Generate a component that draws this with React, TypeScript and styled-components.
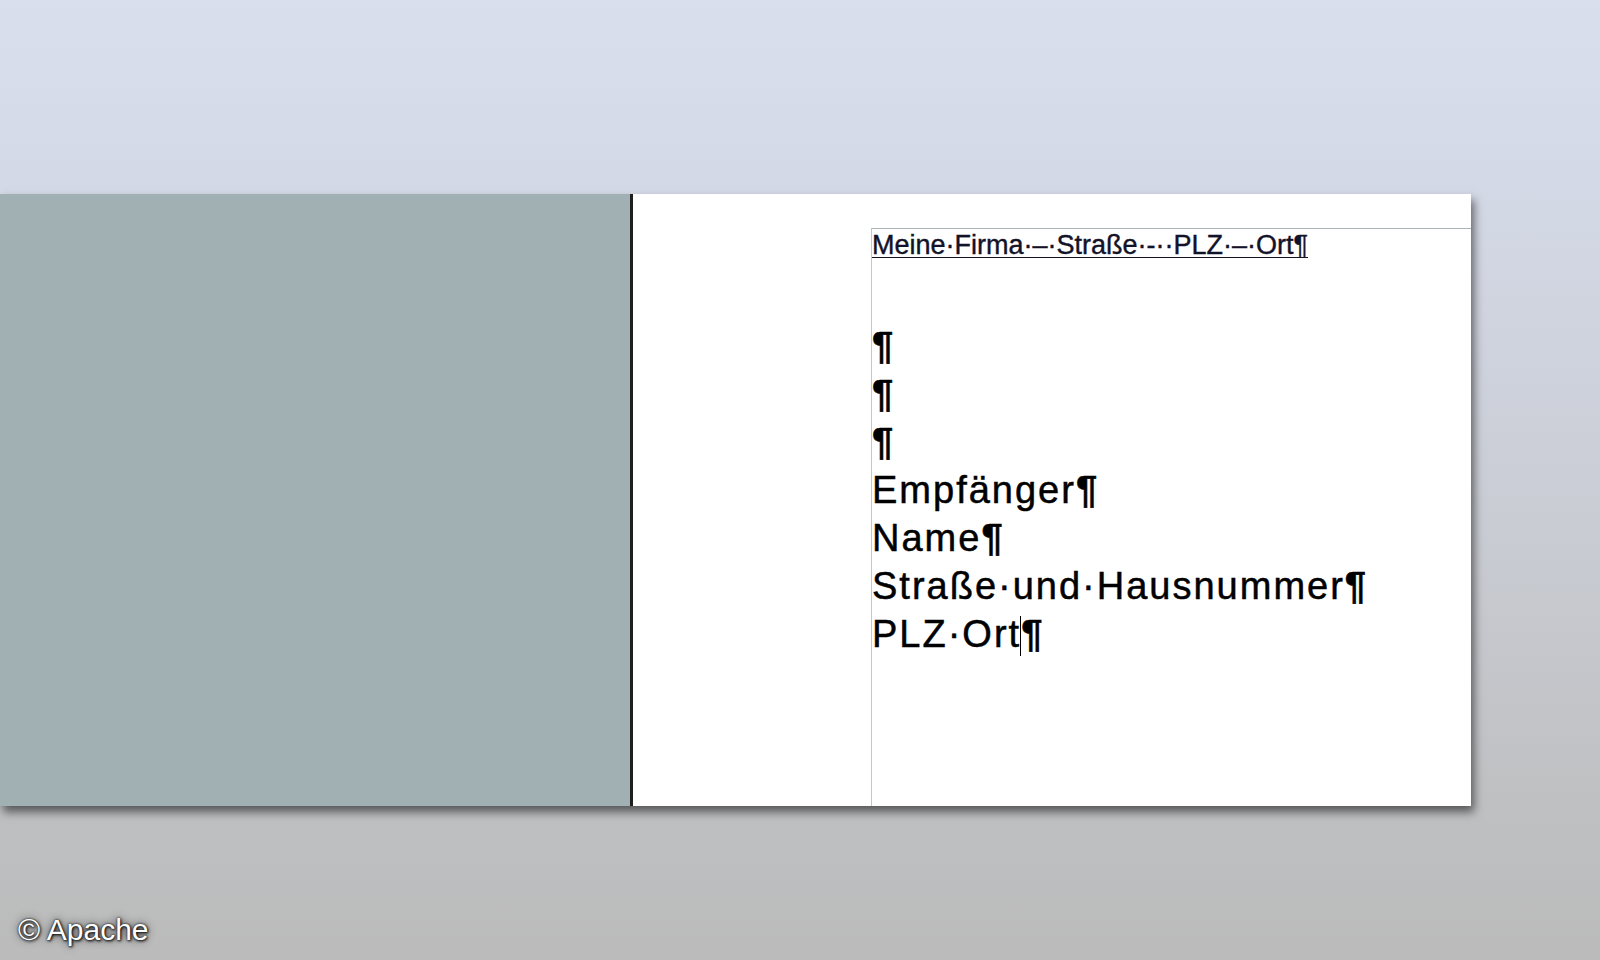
import styled, { createGlobalStyle } from 'styled-components';

const GlobalStyle = createGlobalStyle`
    html, body {
        margin: 0;
        padding: 0;
    }
    body {
        width: 1600px;
        height: 960px;
        overflow: hidden;
        font-family: "Liberation Sans", Arial, sans-serif;
        background: linear-gradient(
            to bottom,
            #d9dfed 0%,
            #d3d8e5 22%,
            #c9ccd3 55%,
            #bfc0c2 84%,
            #bbbbbb 100%
        );
    }
`;

const bodyLines = ['', '', '', 'Empfänger', 'Name', 'Straße·und·Hausnummer'];

export default function App() {
    return (
        <>
            <GlobalStyle />
            <Screen>
                <TopBand />
                <DocRow>
                    <SidePanel />
                    <Page>
                        <Gutter />
                        <TextArea>
                            <HeaderLine>
                                Meine·Firma·–·Straße·-··PLZ·–·Ort¶
                            </HeaderLine>
                            <Body>
                                {bodyLines.map((line, i) => (
                                    <Line key={i}>
                                        {line}
                                        <Pilcrow>¶</Pilcrow>
                                    </Line>
                                ))}
                                <Line>
                                    PLZ·Ort
                                    <Caret />
                                    <Pilcrow>¶</Pilcrow>
                                </Line>
                            </Body>
                        </TextArea>
                    </Page>
                </DocRow>
                <Footer>
                    <Credit>© Apache</Credit>
                </Footer>
            </Screen>
        </>
    );
}

const Screen = styled.div`
    width: 1600px;
    height: 960px;
    display: flex;
    flex-direction: column;
`;

const TopBand = styled.div`
    height: 194px;
    flex-shrink: 0;
`;

const DocRow = styled.div`
    height: 612px;
    width: 1471px;
    flex-shrink: 0;
    display: flex;
    box-shadow: 3px 6px 9px rgba(0, 0, 0, 0.55);
`;

const SidePanel = styled.div`
    width: 630px;
    background: #a0b0b3;
`;

const Page = styled.div`
    flex: 1;
    display: flex;
    background: #ffffff;
    border-left: 3px solid #1f1f1f;
`;

const Gutter = styled.div`
    width: 238px;
    flex-shrink: 0;
`;

const TextArea = styled.div`
    flex: 1;
    margin-top: 34px;
    border-top: 1px solid #aab3b5;
    border-left: 1px solid #c3c7c8;
    color: #000;
`;

const HeaderLine = styled.div`
    font-size: 27px;
    line-height: 32px;
    color: #121228;
    -webkit-text-stroke: 0.4px #121228;
    text-decoration: underline;
    text-decoration-thickness: 1px;
    text-underline-offset: 3px;
    white-space: nowrap;
`;

const Body = styled.div`
    margin-top: 61px;
    font-size: 38px;
    line-height: 48px;
    letter-spacing: 2px;
    -webkit-text-stroke: 0.5px #000;
`;

const Line = styled.div`
    white-space: nowrap;
    height: 48px;
`;

const Pilcrow = styled.span`
    font-weight: bold;
    letter-spacing: 0;
`;

const Caret = styled.span`
    display: inline-block;
    width: 1px;
    height: 40px;
    margin: 0 0 0 -1px;
    background: #000;
    vertical-align: -9px;
`;

const Footer = styled.div`
    flex: 1;
    display: flex;
    align-items: flex-end;
    padding: 0 0 13px 18px;
`;

const Credit = styled.div`
    font-size: 30px;
    line-height: 34px;
    color: #ffffff;
    text-shadow: 0 0 2px #111, 1px 1px 3px #000, 0 0 8px rgba(0, 0, 0, 0.8);
`;
